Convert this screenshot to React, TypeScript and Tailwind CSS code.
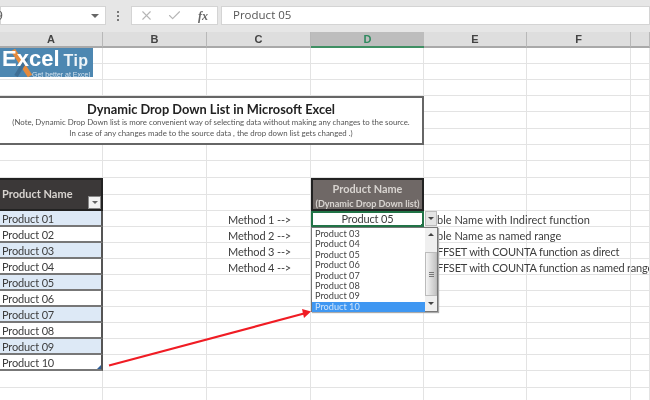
import { Check, X } from "lucide-react";

const columns = ["A", "B", "C", "D", "E", "F", ""];
const products = ["01", "02", "03", "04", "05", "06", "07", "08", "09", "10"];
const listItems = ["03", "04", "05", "06", "07", "08", "09"];
const methods = [
    "ble Name with Indirect function",
    "ble Name as named range",
    "FFSET with COUNTA function as direct",
    "FFSET with COUNTA function as named range",
];

function Cell({ children, className = "" }: { children?: React.ReactNode; className?: string }) {
    return (
        <div className={`min-w-0 border-r border-b border-[#e3e3e3] ${className}`}>{children}</div>
    );
}

function Blanks({ count }: { count: number }) {
    return (
        <>
            {Array.from({ length: count }).map((_, i) => (
                <Cell key={i} />
            ))}
        </>
    );
}

function Logo() {
    return (
        <div className="absolute left-0 top-0 h-[29px] w-[93px] bg-[#4d87b1] font-['Liberation_Sans',sans-serif]">
            <svg className="absolute left-[8px] top-0" width="26" height="29" viewBox="0 0 26 29">
                <path d="M5 2 L22 28" stroke="#e58a3c" strokeWidth="5" fill="none" />
                <path d="M19 10 L8 28" stroke="#3f6f95" strokeWidth="4" fill="none" />
            </svg>
            <div className="relative flex items-baseline pl-[2px] leading-[21px] tracking-normal text-white">
                <span className="text-[22px] font-bold">Excel</span>
                <span className="ml-[4px] text-[16px] font-bold tracking-[0.4px] text-[#eef4f8]">Tip</span>
            </div>
            <div className="relative pr-[3px] text-right text-[7px] leading-[7px] tracking-normal text-[#d5e3ee]">
                Get better at Excel
            </div>
        </div>
    );
}

function FormulaBar() {
    return (
        <div className="flex h-[32px] items-start bg-[#e6e6e6] pt-[6px] font-['Open_Sans',sans-serif] text-[#555]">
            <div className="flex h-[19px] w-[106px] items-center justify-between border border-[#d4d4d4] bg-white pr-[6px] text-[12px]">
                <span className="-ml-[5px]">9</span>
                <span className="h-0 w-0 border-x-[4px] border-t-[4px] border-x-transparent border-t-[#666]" />
            </div>
            <div className="ml-[11px] flex w-[3px] flex-col gap-[2px] pt-[5px]">
                <span className="h-[2px] w-[2px] bg-[#777]" />
                <span className="h-[2px] w-[2px] bg-[#777]" />
                <span className="h-[2px] w-[2px] bg-[#777]" />
            </div>
            <div className="ml-[11px] flex h-[19px] w-[87px] items-center gap-[13px] border border-[#d4d4d4] bg-white pl-[7px]">
                <X size={15} strokeWidth={1.8} className="text-[#b5b5b5]" />
                <Check size={15} strokeWidth={1.8} className="text-[#b5b5b5]" />
                <span className="ml-[3px] font-['Liberation_Serif',serif] text-[12px] font-bold italic text-[#666]">fx</span>
            </div>
            <div className="ml-[3px] flex h-[19px] flex-1 items-center border border-[#d4d4d4] bg-white pb-px pl-[11px] text-[11.5px]">
                Product 05
            </div>
        </div>
    );
}

function ColumnHeaders() {
    return (
        <div className="grid h-[16px] grid-cols-[103px_104px_104px_113px_103px_104px_19px] bg-[#dedede] font-['Liberation_Sans',sans-serif] text-[11px] leading-[14px] text-[#444]">
            {columns.map((c) => (
                <div
                    key={c}
                    className={
                        c === "D"
                            ? "border-b-2 border-[#3f8f63] bg-[#bdbdbd] text-center font-bold text-[#2f8a5f]"
                            : "border-r border-b-2 border-r-[#b8b8b8] border-b-[#a9a9a9] text-center font-bold"
                    }
                >
                    {c}
                </div>
            ))}
        </div>
    );
}

function DropdownList() {
    return (
        <div className="absolute left-[311px] top-[179px] flex h-[85px] w-[127px] border border-[#777] bg-white font-['Lato',sans-serif] text-[9.2px] leading-[10.4px] tracking-normal text-[#444] shadow-[1px_1px_1px_#aaa]">
            <div className="flex flex-1 flex-col pt-[1px]">
                {listItems.map((n) => (
                    <div key={n} className="h-[10.4px] pl-[3px]">
                        Product {n}
                    </div>
                ))}
                <div className="mt-auto h-[11px] bg-[#3f97f2] pl-[3px] text-[#cfe4fa]">Product 10</div>
            </div>
            <div className="flex w-[12px] flex-col items-center bg-[#efefef]">
                <span className="mt-[5px] h-0 w-0 border-x-[3px] border-b-[3px] border-x-transparent border-b-[#444]" />
                <div className="mt-[16px] flex h-[44px] w-full flex-col items-center justify-center gap-[1px] border border-[#bbb] bg-gradient-to-r from-[#f4f4f4] to-[#c4c4c4]">
                    <span className="h-px w-[5px] bg-[#777]" />
                    <span className="h-px w-[5px] bg-[#777]" />
                    <span className="h-px w-[5px] bg-[#777]" />
                </div>
                <span className="mt-[6px] h-0 w-0 border-x-[3px] border-t-[3px] border-x-transparent border-t-[#444]" />
            </div>
        </div>
    );
}

export default function App() {
    return (
        <div className="flex h-[400px] w-[650px] flex-col overflow-hidden bg-white blur-[0.5px]">
            <FormulaBar />
            <ColumnHeaders />
            <div className="relative flex-1 font-['Lato',sans-serif] text-[11px] tracking-[-0.15px] text-[#3d3d3d]">
                <div className="grid h-[352px] grid-cols-[103px_104px_104px_113px_103px_104px_19px] grid-rows-[repeat(3,16px)_repeat(3,16.33px)_16px_17px_17px_16px_repeat(12,16.05px)]">
                    <Blanks count={21} />

                    <div className="col-span-4 row-span-3 flex flex-col items-center border-y-2 border-r-2 border-[#666] pt-[3px] text-center">
                        <div className="text-[12.8px] leading-[16px] font-bold tracking-normal text-[#222]">
                            Dynamic Drop Down List in Microsoft Excel
                        </div>
                        <div className="text-[7.85px] leading-[11px] tracking-normal whitespace-nowrap text-[#555]">
                            (Note, Dynamic Drop Down list is more convenient way of selecting data without making any changes to the source.
                            <br />
                            In case of any changes made to the source data , the drop down list gets changed .)
                        </div>
                    </div>
                    <Blanks count={9} />
                    <Blanks count={14} />

                    <div className="relative row-span-2 flex items-center border-y-2 border-r-2 border-[#222] bg-[#3b3838] pl-[2px] font-bold tracking-normal text-[#d8d4d0]">
                        Product Name
                        <span className="absolute right-0 bottom-0 flex h-[13px] w-[13px] items-end justify-center border border-[#888] bg-[#f2f2f2] pb-[4px]">
                            <span className="h-0 w-0 border-x-[3px] border-t-[3px] border-x-transparent border-t-[#666]" />
                        </span>
                    </div>
                    <Blanks count={2} />
                    <div className="row-span-2 flex flex-col items-center border-2 border-[#222] bg-[#6f6866] font-bold tracking-normal text-[#d8d4d0]">
                        <span className="text-[10.9px] leading-[17px]">Product Name</span>
                        <span className="text-[9.1px] leading-[14px] whitespace-nowrap">(Dynamic Drop Down list)</span>
                    </div>
                    <Blanks count={3} />
                    <Blanks count={5} />

                    {products.map((n, i) => {
                        const banded = i % 2 === 0 ? "bg-[#dde9f6]" : "bg-white";
                        return (
                            <div key={n} className="contents">
                                <div className={`relative border-r-2 border-b-2 border-r-[#555] border-b-[#777] pt-[1px] pl-[2px] leading-[14px] ${banded}`}>
                                    Product {n}
                                    {i === 9 && (
                                        <span className="absolute right-0 bottom-0 h-0 w-0 border-b-[4px] border-l-[4px] border-b-[#2f5f9a] border-l-transparent" />
                                    )}
                                </div>
                                <Cell />
                                <Cell className="pt-[1px] pl-[21px] leading-[15px]">{i < 4 && `Method ${i + 1} -->`}</Cell>
                                {i === 0 ? (
                                    <div className="relative border-2 border-[#217346] text-center leading-[12px]">
                                        Product 05
                                        <span className="absolute -right-[2px] -bottom-[2px] h-[3px] w-[3px] bg-[#217346]" />
                                    </div>
                                ) : (
                                    <Cell />
                                )}
                                <Cell className={i < 2 ? "pt-[1px] pl-[13px] leading-[15px] tracking-normal whitespace-nowrap" : "pt-[1px] pl-[13px] leading-[15px] tracking-[-0.2px] whitespace-nowrap"}>
                                    {i < 4 && methods[i]}
                                </Cell>
                                <Cell />
                                <Cell />
                            </div>
                        );
                    })}
                    <Blanks count={14} />
                </div>

                <Logo />
                <div className="absolute left-[425px] top-[163px] flex h-[15px] w-[12px] items-center justify-center border border-[#bbb] bg-[#e4e4e4]">
                    <span className="h-0 w-0 border-x-[3px] border-t-[3px] border-x-transparent border-t-[#444]" />
                </div>
                <DropdownList />
                <svg className="absolute left-0 top-0" width="650" height="352" viewBox="0 0 650 352">
                    <path d="M109 317.5 L304 265.5" stroke="#f01c24" strokeWidth="2.2" fill="none" />
                    <path d="M311 263.5 L302 261 L304 270 Z" fill="#f01c24" />
                </svg>
            </div>
        </div>
    );
}
